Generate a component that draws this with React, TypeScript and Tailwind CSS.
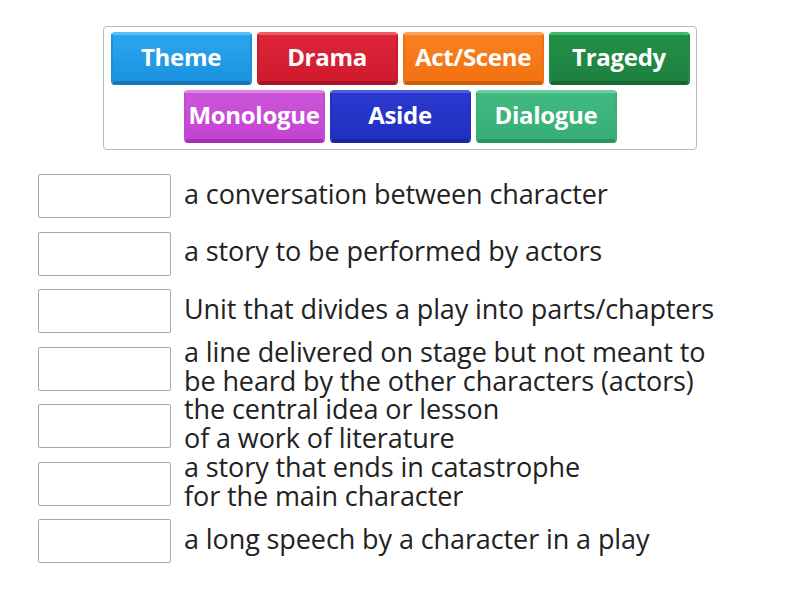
const tiles = [
  { label: "Theme", cls: "bg-gradient-to-b from-[#2aa6ee] to-[#1b93e0] border-t-[#5cc0f4] border-x-[#1e8fd8] border-b-[#1577bb]" },
  { label: "Drama", cls: "bg-gradient-to-b from-[#dc2538] to-[#cf1a2f] border-t-[#ec5a68] border-x-[#c81b2e] border-b-[#a91325]" },
  { label: "Act/Scene", cls: "bg-gradient-to-b from-[#f9801f] to-[#f47212] border-t-[#fca45b] border-x-[#ec6f12] border-b-[#d05c0a]" },
  { label: "Tragedy", cls: "bg-gradient-to-b from-[#238f48] to-[#1d8240] border-t-[#3dbb68] border-x-[#1f8a44] border-b-[#166933]" },
  { label: "Monologue", cls: "bg-gradient-to-b from-[#cc55da] to-[#c443d2] border-t-[#dc86e6] border-x-[#c14ad0] border-b-[#a62fb8]" },
  { label: "Aside", cls: "bg-gradient-to-b from-[#2a38cd] to-[#2230c2] border-t-[#4c5ce3] border-x-[#2432c4] border-b-[#1a25a0]" },
  { label: "Dialogue", cls: "bg-gradient-to-b from-[#40b980] to-[#37ae76] border-t-[#6ccf9f] border-x-[#38b078] border-b-[#2b9463]" },
];

const clues = [
  ["a conversation between character"],
  ["a story to be performed by actors"],
  ["Unit that divides a play into parts/chapters"],
  ["a line delivered on stage but not meant to", "be heard by the other characters (actors)"],
  ["the central idea or lesson", "of a work of literature"],
  ["a story that ends in catastrophe", "for the main character"],
  ["a long speech by a character in a play"],
];

export default function App() {
  return (
    <div className="w-[800px] h-[600px] bg-white font-['Open_Sans',sans-serif] text-[#222]">
      <div className="pt-[26px] flex justify-center">
        <div className="w-[594px] border border-[#b8b8b8] rounded-[4px] px-[5px] pt-[5px] pb-[6px] flex flex-wrap justify-center gap-[5px]">
          {tiles.map((t) => (
            <div
              key={t.label}
              className={`w-[141px] h-[53px] rounded-[4px] border-t-[3px] border-x-[2px] border-b-[4px] pb-[3px] flex items-center justify-center text-white font-bold text-[24px] leading-none tracking-[-0.3px] ${t.cls}`}
            >
              {t.label}
            </div>
          ))}
        </div>
      </div>
      <div className="mt-[24px] pl-[38px] flex flex-col gap-[13.5px]">
        {clues.map((lines, i) => (
          <div key={i} className="h-[44px] flex items-center gap-[13px]">
            <div className="w-[133px] h-[44px] shrink-0 border border-[#a8a8a8] rounded-[2px] bg-white" />
            <div className="text-[27px] leading-[29px] -mt-[6px] tracking-[-0.1px] whitespace-nowrap">
              {lines.map((l) => (
                <div key={l}>{l}</div>
              ))}
            </div>
          </div>
        ))}
      </div>
    </div>
  );
}
